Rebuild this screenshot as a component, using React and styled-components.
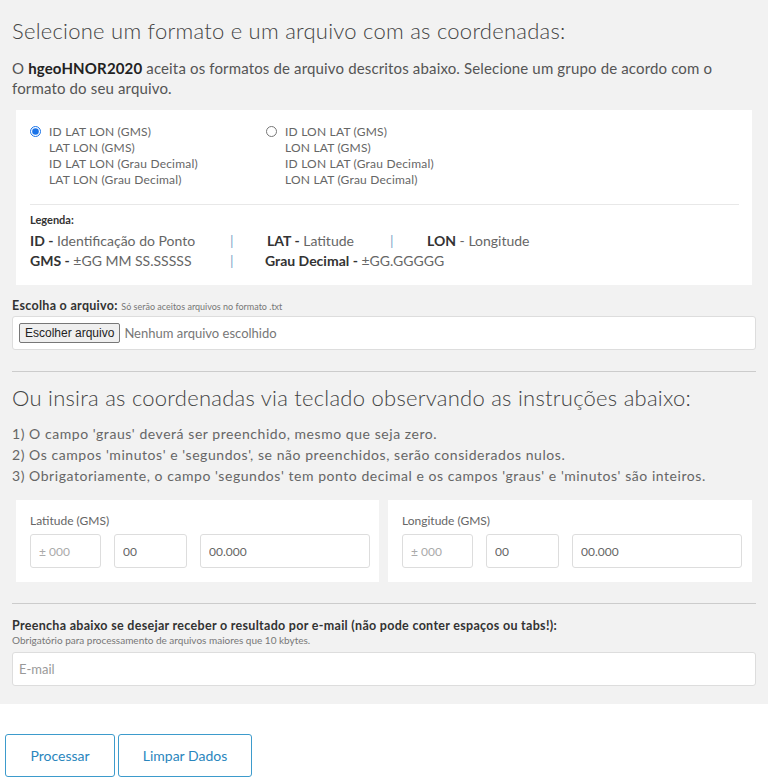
import React from 'react'
import styled, { createGlobalStyle } from 'styled-components'

const GlobalStyle = createGlobalStyle`
  html, body {
    margin: 0;
    padding: 0;
    background: #ffffff;
  }
  body {
    font-family: 'Lato', 'Open Sans', sans-serif;
    color: #555;
  }
  * {
    box-sizing: border-box;
  }
`

const App = () => {
  return (
    <>
      <GlobalStyle />
      <Panel>
        <Title>Selecione um formato e um arquivo com as coordenadas:</Title>
        <Intro>
          O <b>hgeoHNOR2020</b> aceita os formatos de arquivo descritos abaixo.
          Selecione um grupo de acordo com o formato do seu arquivo.
        </Intro>

        <Card>
          <FormatRow>
            <FormatOption>
              <Radio type="radio" name="formato" defaultChecked />
              <FormatList>
                <span>ID LAT LON (GMS)</span>
                <span>LAT LON (GMS)</span>
                <span>ID LAT LON (Grau Decimal)</span>
                <span>LAT LON (Grau Decimal)</span>
              </FormatList>
            </FormatOption>
            <FormatOption>
              <Radio type="radio" name="formato" />
              <FormatList>
                <span>ID LON LAT (GMS)</span>
                <span>LON LAT (GMS)</span>
                <span>ID LON LAT (Grau Decimal)</span>
                <span>LON LAT (Grau Decimal)</span>
              </FormatList>
            </FormatOption>
          </FormatRow>
          <Legend>
            <LegendTitle>Legenda:</LegendTitle>
            <LegendRow>
              <LegendCell $w="200px"><b>ID -</b> Identificação do Ponto</LegendCell>
              <Pipe $w="37px">|</Pipe>
              <LegendCell $w="123px"><b>LAT -</b> Latitude</LegendCell>
              <Pipe $w="37px">|</Pipe>
              <LegendCell><b>LON</b> - Longitude</LegendCell>
            </LegendRow>
            <LegendRow>
              <LegendCell $w="200px"><b>GMS -</b> ±GG MM SS.SSSSS</LegendCell>
              <Pipe $w="35px">|</Pipe>
              <LegendCell><b>Grau Decimal -</b> ±GG.GGGGG</LegendCell>
            </LegendRow>
          </Legend>
        </Card>

        <FileBlock>
          <SmallLabel>
            <b>Escolha o arquivo:</b> <Hint>Só serão aceitos arquivos no formato .txt</Hint>
          </SmallLabel>
          <FileBox>
            <FileButton type="button">Escolher arquivo</FileButton>
            <FileName>Nenhum arquivo escolhido</FileName>
          </FileBox>
        </FileBlock>

        <Rule />

        <Title>Ou insira as coordenadas via teclado observando as instruções abaixo:</Title>
        <Steps>
          <li>1) O campo 'graus' deverá ser preenchido, mesmo que seja zero.</li>
          <li>2) Os campos 'minutos' e 'segundos', se não preenchidos, serão considerados nulos.</li>
          <li>3) Obrigatoriamente, o campo 'segundos' tem ponto decimal e os campos 'graus' e 'minutos' são inteiros.</li>
        </Steps>

        <CoordGrid>
          {['Latitude (GMS)', 'Longitude (GMS)'].map((label) => (
            <CoordCard key={label}>
              <CoordLabel>{label}</CoordLabel>
              <CoordInputs>
                <CoordInput $w="71px" placeholder="± 000" $faint />
                <CoordInput $w="73px" placeholder="00" />
                <CoordInput $w="170px" placeholder="00.000" />
              </CoordInputs>
            </CoordCard>
          ))}
        </CoordGrid>

        <Rule />

        <EmailBlock>
          <SmallLabel><b>Preencha abaixo se desejar receber o resultado por e-mail (não pode conter espaços ou tabs!):</b></SmallLabel>
          <Hint as="div" $size="10px">Obrigatório para processamento de arquivos maiores que 10 kbytes.</Hint>
          <EmailInput placeholder="E-mail" />
        </EmailBlock>
      </Panel>

      <Actions>
        <ActionButton $w="110px">Processar</ActionButton>
        <ActionButton $w="134px">Limpar Dados</ActionButton>
      </Actions>
    </>
  )
}

const Panel = styled.div`
  background: #f2f2f2;
  padding: 16px 12px 18px;
`

const Title = styled.h2`
  margin: 0 0 12px;
  font-weight: 300;
  font-size: 22px;
  line-height: 30px;
  color: #444;
  letter-spacing: 0.25px;
`

const Intro = styled.p`
  margin: 0 0 12px;
  font-size: 15px;
  line-height: 20px;
  letter-spacing: 0.15px;
  color: #555;
  b {
    color: #222;
  }
`

const Card = styled.div`
  background: #fff;
  margin: 0 4px;
  padding: 14px 13px 14px 14px;
`

const FormatRow = styled.div`
  display: flex;
  padding-bottom: 16px;
  border-bottom: 1px solid #e8e8e8;
`

const FormatOption = styled.label`
  display: flex;
  align-items: flex-start;
  width: 236px;
`

const Radio = styled.input`
  width: 11px;
  height: 11px;
  margin: 2px 8px 0 0;
  accent-color: #1a73e8;
`

const FormatList = styled.div`
  display: flex;
  flex-direction: column;
  font-size: 12px;
  line-height: 16px;
  letter-spacing: 0.2px;
  color: #666;
`

const Legend = styled.div`
  padding-top: 8px;
`

const LegendTitle = styled.div`
  font-size: 11px;
  font-weight: 700;
  color: #333;
  line-height: 14px;
  margin-bottom: 4px;
`

const LegendRow = styled.div`
  display: flex;
  font-size: 14px;
  line-height: 20px;
  color: #666;
  b {
    color: #333;
  }
`

const LegendCell = styled.span`
  width: ${(p) => p.$w || 'auto'};
  white-space: nowrap;
`

const Pipe = styled.span`
  width: ${(p) => p.$w};
  color: #7fa6c8;
`

const FileBlock = styled.div`
  margin-top: 13px;
`

const SmallLabel = styled.div`
  font-size: 12.5px;
  line-height: 15px;
  letter-spacing: 0.3px;
  color: #333;
`

const Hint = styled.span`
  font-size: ${(p) => p.$size || '9px'};
  color: #777;
  letter-spacing: 0;
  line-height: 14px;
`

const FileBox = styled.div`
  display: flex;
  align-items: center;
  margin-top: 2px;
  height: 34px;
  background: #fff;
  border: 1px solid #ddd;
  border-radius: 3px;
  padding: 0 6px;
`

const FileButton = styled.button`
  font-family: 'Liberation Sans', Arial, sans-serif;
  font-size: 12px;
  height: 20px;
  padding: 0 5px;
  background: #efefef;
  border: 1px solid #777;
  border-radius: 2px;
  color: #222;
`

const FileName = styled.span`
  margin-left: 4px;
  font-size: 13px;
  color: #777;
`

const Rule = styled.hr`
  border: 0;
  border-top: 1px solid #ccc;
  margin: 21px 0 11px;
`

const Steps = styled.ul`
  list-style: none;
  margin: -2px 0 14px;
  padding: 0;
  li {
    font-size: 14px;
    line-height: 21px;
    letter-spacing: 0.55px;
    color: #666;
  }
`

const CoordGrid = styled.div`
  display: grid;
  grid-template-columns: 363px 364px;
  gap: 9px;
  margin: 0 4px;
`

const CoordCard = styled.div`
  background: #fff;
  padding: 13px 14px 14px;
`

const CoordLabel = styled.div`
  font-size: 12px;
  line-height: 16px;
  color: #666;
  margin-bottom: 5px;
`

const CoordInputs = styled.div`
  display: flex;
  gap: 13px;
`

const CoordInput = styled.input`
  width: ${(p) => p.$w};
  height: 34px;
  border: 1px solid #ddd;
  border-radius: 3px;
  padding: 0 8px;
  font-family: inherit;
  font-size: 12px;
  &::placeholder {
    color: ${(p) => (p.$faint ? '#aaa' : '#666')};
  }
`

const EmailBlock = styled.div`
  margin-top: 14px;
`

const EmailInput = styled.input`
  display: block;
  width: 100%;
  height: 34px;
  margin-top: 5px;
  border: 1px solid #ddd;
  border-radius: 3px;
  background: #fff;
  padding: 0 6px;
  font-family: inherit;
  font-size: 13px;
  &::placeholder {
    color: #999;
  }
`

const Actions = styled.div`
  display: flex;
  gap: 3px;
  padding: 30px 5px 0;
`

const ActionButton = styled.button`
  width: ${(p) => p.$w};
  height: 43px;
  background: #fff;
  border: 1px solid #3d9bcc;
  border-radius: 3px;
  color: #2a86bd;
  font-family: inherit;
  font-size: 14px;
`

export default App
